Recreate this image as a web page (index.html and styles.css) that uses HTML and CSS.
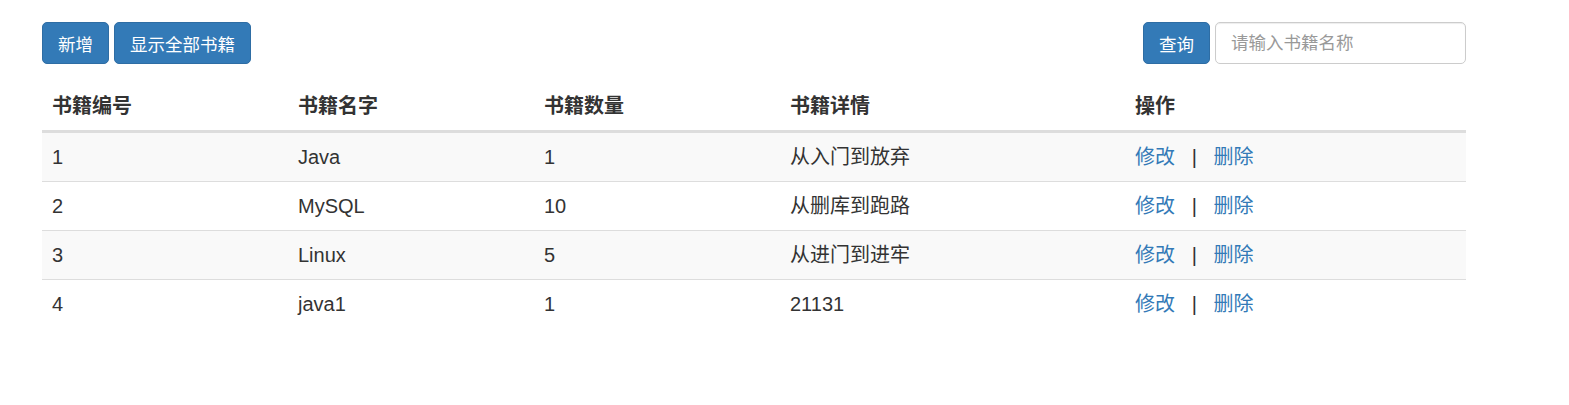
FILE: index.html
```html
<!DOCTYPE html>
<html lang="zh-CN">
<head>
<meta charset="utf-8">
<title>书籍列表</title>
<link rel="stylesheet" href="styles.css">
</head>
<body>
<div class="container">
  <div class="toolbar">
    <div class="left">
      <a class="btn" href="#">新增</a>
      <a class="btn wide" href="#">显示全部书籍</a>
    </div>
    <form class="search" onsubmit="return false">
      <button class="btn" type="submit">查询</button>
      <input class="input" type="text" placeholder="请输入书籍名称">
    </form>
  </div>
  <table class="table">
    <colgroup>
      <col class="c1"><col class="c2"><col class="c3"><col class="c4"><col class="c5">
    </colgroup>
    <thead>
      <tr><th>书籍编号</th><th>书籍名字</th><th>书籍数量</th><th>书籍详情</th><th>操作</th></tr>
    </thead>
    <tbody>
      <tr class="odd"><td>1</td><td>Java</td><td>1</td><td>从入门到放弃</td><td><a href="#">修改</a>&nbsp;&nbsp;&nbsp;|&nbsp;&nbsp;&nbsp;<a href="#">删除</a></td></tr>
      <tr><td>2</td><td>MySQL</td><td>10</td><td>从删库到跑路</td><td><a href="#">修改</a>&nbsp;&nbsp;&nbsp;|&nbsp;&nbsp;&nbsp;<a href="#">删除</a></td></tr>
      <tr class="odd"><td>3</td><td>Linux</td><td>5</td><td>从进门到进牢</td><td><a href="#">修改</a>&nbsp;&nbsp;&nbsp;|&nbsp;&nbsp;&nbsp;<a href="#">删除</a></td></tr>
      <tr class="last"><td>4</td><td>java1</td><td>1</td><td>21131</td><td><a href="#">修改</a>&nbsp;&nbsp;&nbsp;|&nbsp;&nbsp;&nbsp;<a href="#">删除</a></td></tr>
    </tbody>
  </table>
</div>
</body>
</html>
```
FILE: styles.css
```css
html, body {
  margin: 0;
  padding: 0;
  background: #fff;
}
body {
  font-family: "Liberation Sans", "Noto Sans CJK SC", sans-serif;
  color: #333;
}
.container {
  width: 1424px;
  margin-left: 42px;
  padding-top: 22px;
}
.toolbar {
  display: flex;
  justify-content: space-between;
  align-items: center;
}
.left, .search {
  display: flex;
  gap: 5px;
  margin: 0;
}
.btn {
  box-sizing: border-box;
  display: inline-flex;
  align-items: center;
  justify-content: center;
  height: 42px;
  padding: 0 15px;
  font-family: inherit;
  font-size: 17.5px;
  color: #fff;
  background: #337ab7;
  border: 1px solid #2e6da4;
  border-radius: 5px;
  text-decoration: none;
  cursor: pointer;
}
.input {
  box-sizing: border-box;
  width: 251px;
  height: 42px;
  padding: 0 15px;
  font-family: inherit;
  font-size: 17.5px;
  color: #555;
  border: 1px solid #ccc;
  border-radius: 5px;
  box-shadow: inset 0 1px 1px rgba(0,0,0,.075);
  outline: none;
}
.input::placeholder {
  color: #999;
}
.table {
  width: 1424px;
  margin-top: 18px;
  border-collapse: collapse;
  border-spacing: 0;
  table-layout: fixed;
  font-size: 20px;
  line-height: 28px;
}
.c1, .c2, .c3 { width: 246px; }
.c4 { width: 345px; }
.c5 { width: 341px; }
.table th {
  text-align: left;
  font-weight: bold;
  padding: 10px;
  border-bottom: 3px solid #ddd;
}
.table td {
  padding: 10px;
  border-bottom: 1px solid #ddd;
  white-space: nowrap;
}
.table tr.last td {
  border-bottom: 0;
}
.table tr.odd td {
  background: #f9f9f9;
}
.table a {
  color: #337ab7;
  text-decoration: none;
}
```
